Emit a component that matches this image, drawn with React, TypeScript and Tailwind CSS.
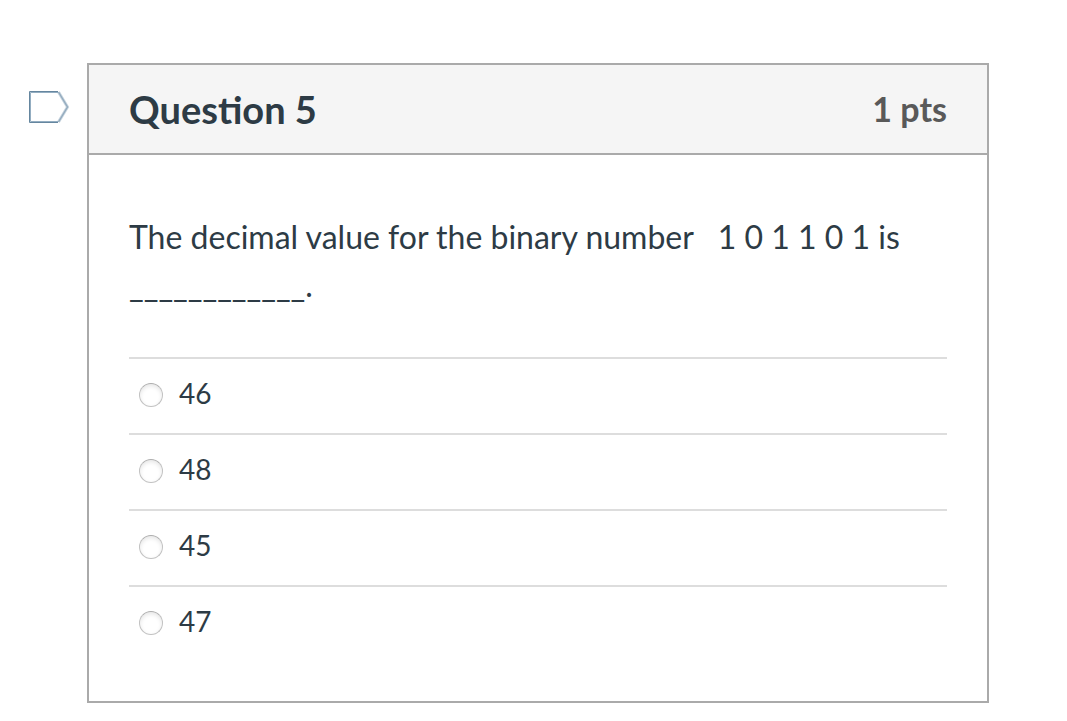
const answers = ["46", "48", "45", "47"];

function FlagIcon() {
  return (
    <svg width="42" height="34" viewBox="0 0 42 34" fill="none" aria-hidden="true">
      <path d="M30.5 2L39.5 17L30.5 32" stroke="#c8d5df" strokeWidth="3" />
      <path d="M30.5 2L39.5 17L30.5 32" stroke="#93abbe" strokeWidth="1.4" />
      <path d="M30 2.5H2.5V31.5H30" stroke="#93adc1" strokeWidth="1" />
      <path d="M30 1.5H1.5V32.5H30" stroke="#65869f" strokeWidth="1" />
    </svg>
  );
}

export default function App() {
  return (
    <main className="flex items-start bg-white pt-[63px] pr-[78px] pb-[18px] pl-7 font-['Lato',sans-serif] text-[#2d3b45]">
      <button type="button" aria-label="Flag question" className="mt-[27px] mr-[17px] shrink-0">
        <FlagIcon />
      </button>

      <section className="min-w-0 flex-1 border-2 border-[#aaaaaa]">
        {/* Header */}
        <header className="flex items-center justify-between border-b-2 border-[#aaaaaa] bg-[#f5f5f5] px-10 py-5">
          <h2 className="text-[38px] leading-12 font-bold">Question 5</h2>
          <span className="text-[34px] leading-12 font-bold text-[#595959]">1 pts</span>
        </header>

        <div className="px-10 pt-[58px] pb-10">
          <p id="question-text" className="mb-12 text-[32px] leading-12">
            The decimal value for the binary number &nbsp; 1 0 1 1 0 1 is ____________.
          </p>

          {/* Answers */}
          <fieldset aria-labelledby="question-text">
            {answers.map((answer) => (
              <label
                key={answer}
                className="flex h-[76px] items-start gap-4 border-t-2 border-[#dddddd] pt-[18px] pl-2.5 text-[28px] leading-8">
                <input
                  type="radio"
                  name="answer"
                  value={answer}
                  className="mt-1.5 size-6 appearance-none rounded-full border border-[#c2c2c2] border-t-[#adadad] bg-white shadow-[inset_0_2px_4px_#e6e6e6] checked:border-8"
                />
                {answer}
              </label>
            ))}
          </fieldset>
        </div>
      </section>
    </main>
  );
}
